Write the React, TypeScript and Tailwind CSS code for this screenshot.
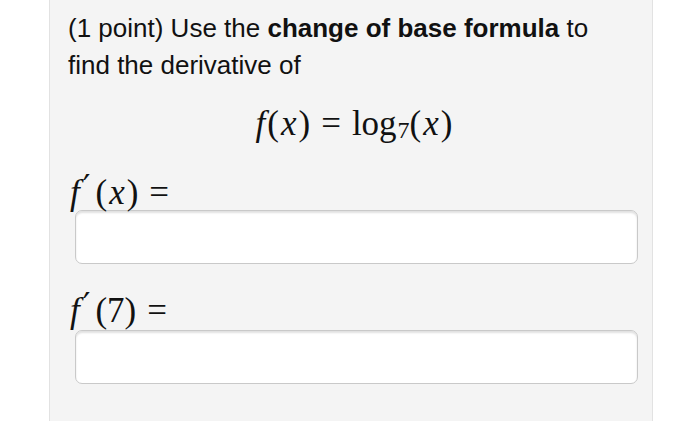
import React from 'react';

const serif = { fontFamily: '"Liberation Serif", "DejaVu Serif", serif' };

function Eq() {
  return <span className="mx-[11px]">=</span>;
}

function V({ children }: { children: React.ReactNode }) {
  return <i className="mx-[2px]">{children}</i>;
}

function Prime() {
  return (
    <span
      className="relative -top-[5px] ml-[1px] mr-[5px] text-[34px] leading-[0]"
      style={{ fontFamily: '"DejaVu Sans", sans-serif' }}
    >
      ′
    </span>
  );
}

function AnswerBox() {
  return (
    <div className="ml-[7px] w-[563px] h-[54px] rounded-[7px] border border-[#c9c9c9] bg-white shadow-[inset_0_2px_2px_rgba(0,0,0,0.12)]" />
  );
}

export default function App() {
  return (
    <div className="w-[700px] h-[422px] bg-white">
      <div
        className="ml-[49px] w-[604px] h-[421px] bg-[#f4f4f4] border-x border-[#e2e2e2] pl-[18px] pt-[10px] text-[#111]"
        style={{ fontFamily: '"Liberation Sans", Arial, sans-serif' }}
      >
        <p className="w-[540px] text-[26px] leading-[37px]">
          (1 point) Use the <b>change of base formula</b> to find the derivative of
        </p>

        <div className="mt-[20px] h-[40px] text-center text-[35px] leading-[40px] pr-[14px]" style={serif}>
          <V>f</V>(<V>x</V>)<Eq />log<sub className="text-[24px] relative top-[3px] align-baseline ml-[1px]">7</sub>(<V>x</V>)
        </div>

        <div className="mt-[29px] h-[40px] -mb-[3px] text-[35px] leading-[40px]" style={serif}>
          <V>f</V>
          <Prime />(<V>x</V>)<Eq />
        </div>
        <AnswerBox />

        <div className="mt-[27px] h-[40px] -mb-[1px] text-[35px] leading-[40px]" style={serif}>
          <V>f</V>
          <Prime />(7)<Eq />
        </div>
        <AnswerBox />
      </div>
    </div>
  );
}
